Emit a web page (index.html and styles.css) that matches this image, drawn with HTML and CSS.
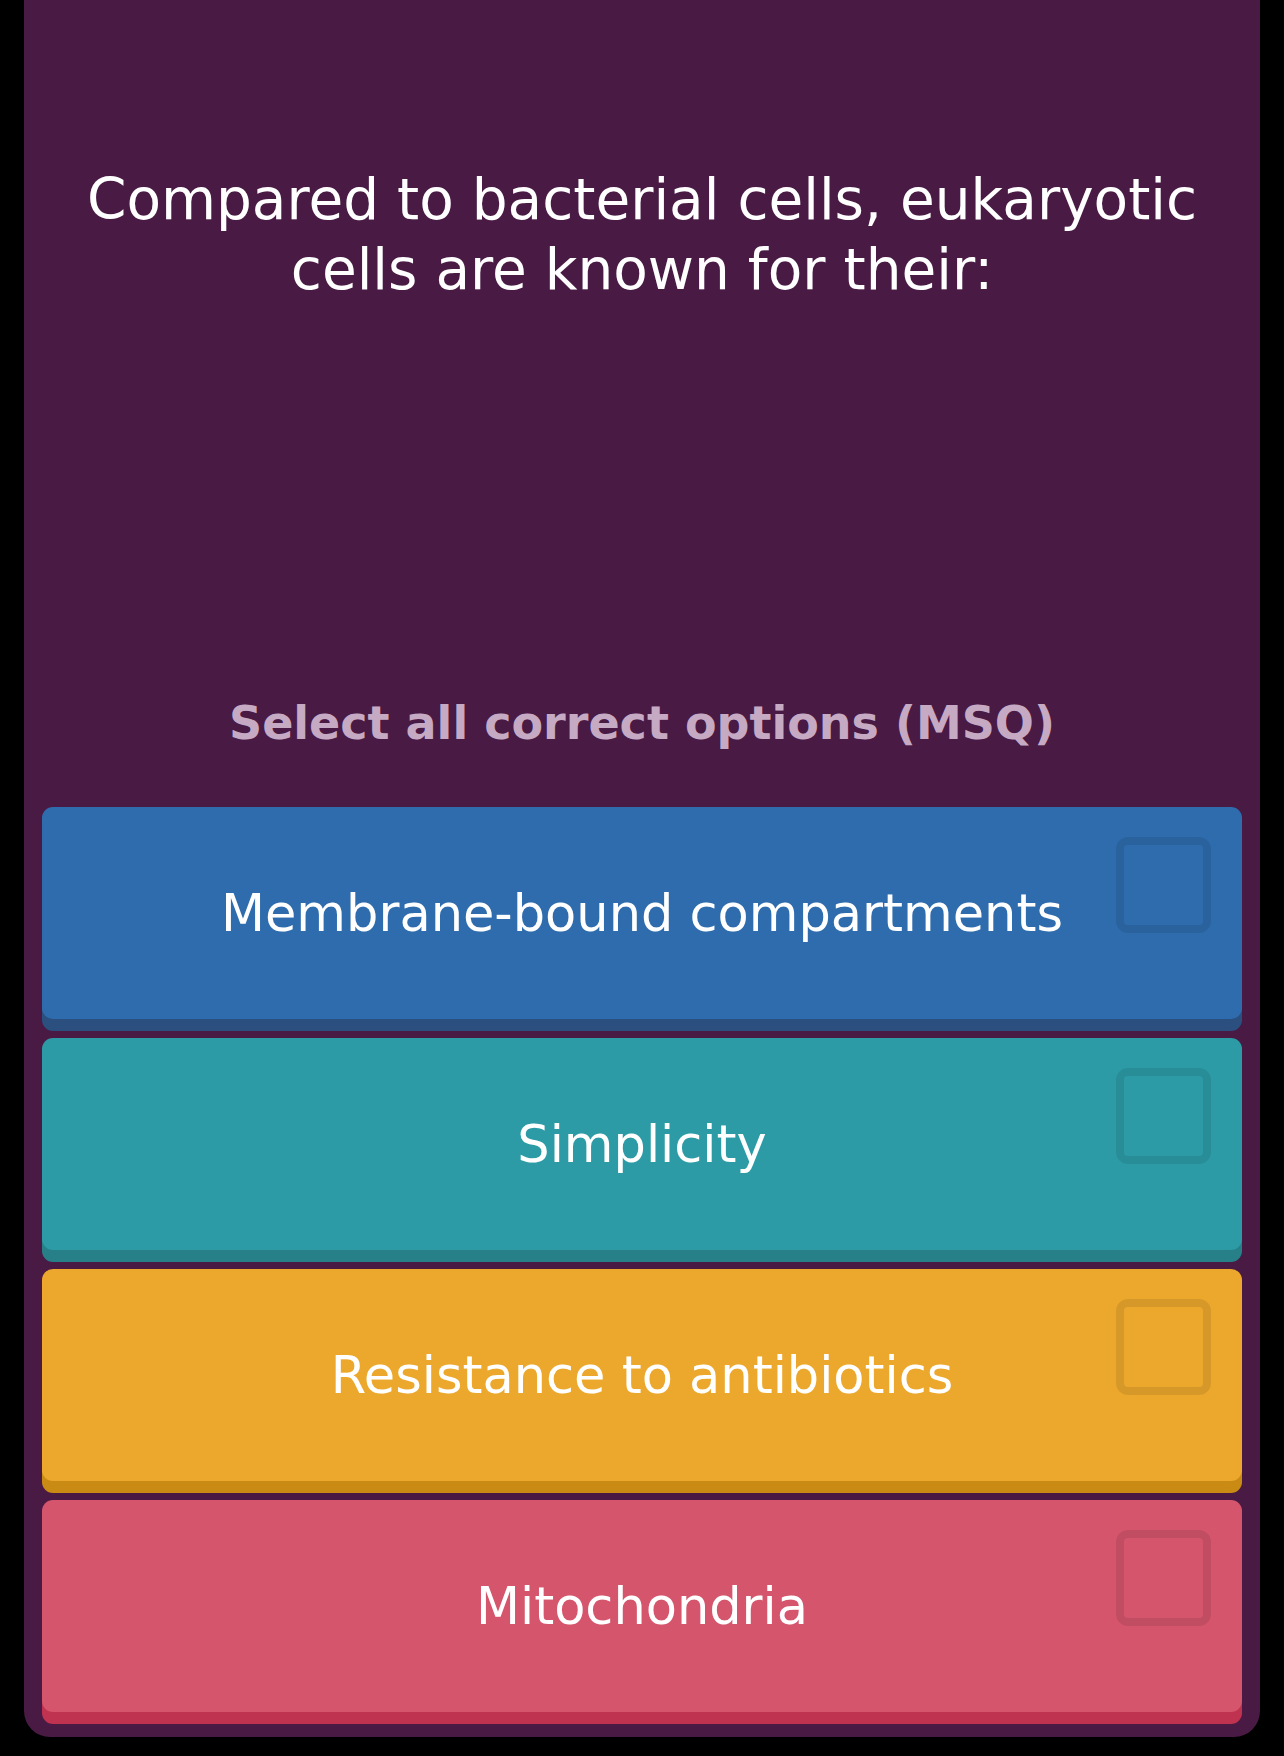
FILE: index.html
```html
<!DOCTYPE html>
<html lang="en">
<head>
<meta charset="utf-8">
<title>Quiz</title>
<link rel="stylesheet" href="styles.css">
</head>
<body>
<div class="panel">
  <div class="question">
    <p class="q-text">Compared to bacterial cells, eukaryotic<br>cells are known for their:</p>
  </div>
  <p class="hint">Select all correct options (MSQ)</p>
  <div class="options">
    <div class="option blue"><span class="label">Membrane-bound compartments</span><span class="box"></span></div>
    <div class="option teal"><span class="label">Simplicity</span><span class="box"></span></div>
    <div class="option yellow"><span class="label">Resistance to antibiotics</span><span class="box"></span></div>
    <div class="option red"><span class="label">Mitochondria</span><span class="box"></span></div>
  </div>
</div>
</body>
</html>
```
FILE: styles.css
```css
html, body {
  margin: 0;
  padding: 0;
  background: #000;
}
body {
  width: 1284px;
  height: 1756px;
  font-family: "DejaVu Sans", "Lato", sans-serif;
}
.panel {
  margin: 0 24px;
  width: 1236px;
  height: 1737px;
  box-sizing: border-box;
  padding: 0 18px;
  background: #481a44;
  border-radius: 0 0 26px 26px;
  display: flex;
  flex-direction: column;
}
.question {
  padding-top: 165px;
}
.q-text {
  margin: 0;
  color: #fff;
  text-align: center;
  font-size: 56.5px;
  line-height: 70px;
}
.hint {
  margin: 388px 0 0;
  color: #c6aac4;
  text-align: center;
  font-weight: 700;
  font-size: 46px;
  line-height: 60px;
}
.options {
  margin-top: 54px;
  display: flex;
  flex-direction: column;
  gap: 19px;
}
.option {
  position: relative;
  height: 212px;
  border-radius: 11px;
  display: flex;
  align-items: center;
  justify-content: center;
  color: #fff;
  font-size: 51px;
}
.blue { background: #2f6cad; box-shadow: 0 12px 0 #2b4f7f; }
.teal { background: #2c9ba6; box-shadow: 0 12px 0 #277f87; }
.yellow { background: #eca82d; box-shadow: 0 12px 0 #c98b14; }
.red { background: #d4556c; box-shadow: 0 12px 0 #bf3250; }
.box {
  position: absolute;
  top: 30px;
  right: 31px;
  width: 95px;
  height: 96px;
  box-sizing: border-box;
  border: 8px solid rgba(0, 0, 0, 0.09);
  border-radius: 12px;
}
```
